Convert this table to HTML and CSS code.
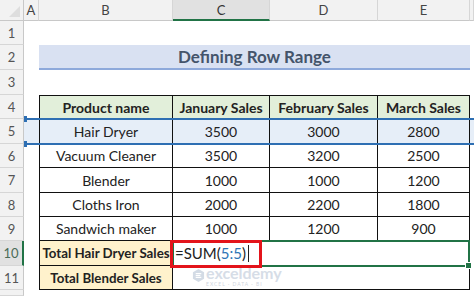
FILE: index.html
```html
<!DOCTYPE html>
<html lang="en">
<head>
    <meta charset="UTF-8">
    <meta name="viewport" content="width=device-width, initial-scale=1.0">
    <title>Defining Row Range</title>
    <link rel="stylesheet" href="styles.css">
</head>
<body>

    <div class="sheet">
        <!-- column headers -->
        <div class="corner"><span class="corner-tri"></span></div>
        <div class="ch">A</div>
        <div class="ch">B</div>
        <div class="ch active">C</div>
        <div class="ch">D</div>
        <div class="ch">E</div>
        <div class="ch"></div>

        <!-- row 1 -->
        <div class="rh">1</div>
        <div></div><div></div><div></div><div></div><div></div><div></div>

        <!-- row 2 -->
        <div class="rh">2</div>
        <div></div>
        <div class="title">Defining Row Range</div>
        <div></div>

        <!-- row 3 -->
        <div class="rh">3</div>
        <div></div><div></div><div></div><div></div><div></div><div></div>

        <!-- row 4 -->
        <div class="rh">4</div>
        <div></div>
        <div class="cell th first">Product name</div>
        <div class="cell th">January Sales</div>
        <div class="cell th">February Sales</div>
        <div class="cell th">March Sales</div>
        <div></div>

        <!-- row 5 (selected) -->
        <div class="rh">5</div>
        <div class="picked"></div>
        <div class="cell first picked">Hair Dryer</div>
        <div class="cell picked">3500</div>
        <div class="cell picked">3000</div>
        <div class="cell picked">2800</div>
        <div class="picked"></div>

        <!-- row 6 -->
        <div class="rh">6</div>
        <div></div>
        <div class="cell first">Vacuum Cleaner</div>
        <div class="cell">3500</div>
        <div class="cell">3200</div>
        <div class="cell">2500</div>
        <div></div>

        <!-- row 7 -->
        <div class="rh">7</div>
        <div></div>
        <div class="cell first">Blender</div>
        <div class="cell">1000</div>
        <div class="cell">1000</div>
        <div class="cell">1200</div>
        <div></div>

        <!-- row 8 -->
        <div class="rh">8</div>
        <div></div>
        <div class="cell first">Cloths Iron</div>
        <div class="cell">2000</div>
        <div class="cell">2200</div>
        <div class="cell">1800</div>
        <div></div>

        <!-- row 9 -->
        <div class="rh">9</div>
        <div></div>
        <div class="cell first">Sandwich maker</div>
        <div class="cell">1000</div>
        <div class="cell">1200</div>
        <div class="cell">900</div>
        <div></div>

        <!-- row 10 -->
        <div class="rh active">10</div>
        <div></div>
        <div class="cell first total">Total Hair Dryer Sales</div>
        <div class="cell merged formula">=SUM(<span class="ref">5:5</span>)<span class="caret"></span></div>
        <div></div>

        <!-- row 11 -->
        <div class="rh">11</div>
        <div></div>
        <div class="cell first total">Total Blender Sales</div>
        <div class="cell merged"></div>
        <div></div>

        <!-- row 12 (cut off) -->
        <div class="rh"></div>
        <div></div><div></div><div></div><div></div><div></div><div></div>

        <!-- selection overlays -->
        <div class="row-pick top"><span class="grip"></span></div>
        <div class="row-pick bottom"><span class="grip"></span></div>
        <div class="active-cell"><span class="fill-handle"></span></div>
        <div class="red-box"></div>

        <div class="watermark">
            <svg class="wm-icon" width="13" height="15" viewBox="0 0 14 16">
                <path d="M7 1 L13 4.5 L13 11.5 L7 15 L1 11.5 L1 4.5 Z" fill="#d3dbe5"/>
                <path d="M4 6 L10 6 M4 8 L9 8 M4 10 L10 10" stroke="#fff" stroke-width="1.2"/>
            </svg>
            <div class="wm-text">
                <span class="wm-name">exceldemy</span>
                <span class="wm-tag">EXCEL · DATA · BI</span>
            </div>
        </div>
    </div>

</body>
</html>
```

FILE: styles.css
```css
body {
    margin: 0;
    padding: 0;
    background: #fff;
    font-family: Lato, "Open Sans", sans-serif;
    color: #222;
    overflow: hidden;
}
.sheet {
    position: relative;
    display: grid;
    grid-template-columns: 24px 15px 134px 97px 108px 92px 4px;
    grid-template-rows: 21px 24px 25px 25px 24px 25px 24px 25px 24px 24px 25px 24px 6px;
    width: 474px;
    height: 296px;
}
.sheet > div {
    box-sizing: border-box;
    min-width: 0;
}

/* headers */
.corner {
    background: #f2f2f2;
    border-right: 1px solid #c8c8c8;
    border-bottom: 1px solid #c8c8c8;
    position: relative;
}
.corner-tri {
    position: absolute;
    right: 3px;
    bottom: 3px;
    width: 0;
    height: 0;
    border-left: 11px solid transparent;
    border-bottom: 11px solid #dedede;
}
.ch {
    background: #f2f2f2;
    border-right: 1px solid #d6d6d6;
    border-bottom: 1px solid #c8c8c8;
    color: #444;
    font-size: 13px;
    display: flex;
    align-items: center;
    justify-content: center;
}
.ch.active {
    background: #e1e1e1;
    border-bottom: 2px solid #217346;
    color: #333;
}
.rh {
    background: #f2f2f2;
    border-right: 1px solid #c8c8c8;
    border-bottom: 1px solid #d6d6d6;
    color: #555;
    font-size: 13px;
    display: flex;
    align-items: center;
    justify-content: center;
}
.rh.active {
    background: #e1e1e1;
    border-right: 2px solid #217346;
    color: #4a6b57;
}

/* title band */
.title {
    grid-column: span 4;
    background: #d9e1f2;
    border-bottom: 2px solid #8ea9db;
    color: #44546a;
    font-weight: bold;
    font-size: 17px;
    display: flex;
    align-items: center;
    justify-content: center;
}

/* table */
.cell {
    border-right: 1px solid #111;
    border-bottom: 1px solid #111;
    font-size: 14px;
    display: flex;
    align-items: center;
    justify-content: center;
    white-space: nowrap;
}
.cell.first {
    border-left: 1px solid #111;
}
.th {
    background: #e2efda;
    border-top: 1px solid #111;
    font-weight: bold;
}
.picked {
    background: #e6eef8;
}
.total {
    background: #fff2cc;
    font-weight: bold;
    font-size: 13.3px;
}
.merged {
    grid-column: span 3;
}
.formula {
    justify-content: flex-start;
    padding-left: 2px;
    font-size: 15px;
}
.ref {
    color: #2e75b6;
}
.caret {
    display: inline-block;
    width: 1px;
    height: 17px;
    margin-left: 2px;
    background: #222;
}

/* overlays */
.row-pick {
    position: absolute;
    left: 25px;
    right: 0;
    height: 2px;
    background: #2e6fb3;
}
.row-pick.top {
    top: 118px;
}
.row-pick.bottom {
    top: 143px;
}
.grip {
    position: absolute;
    left: -1px;
    top: -2px;
    width: 3px;
    height: 6px;
    background: #2e6fb3;
}
.active-cell {
    position: absolute;
    left: 172px;
    top: 240px;
    width: 298px;
    height: 27px;
    border: 2px solid #217346;
    box-sizing: border-box;
}
.fill-handle {
    position: absolute;
    right: -4px;
    bottom: -4px;
    width: 5px;
    height: 5px;
    background: #217346;
    border: 1px solid #fff;
}
.red-box {
    position: absolute;
    left: 170px;
    top: 240px;
    width: 92px;
    height: 28px;
    border: 3px solid #e3141b;
    box-sizing: border-box;
}
.watermark {
    position: absolute;
    left: 192px;
    top: 268px;
    display: flex;
    align-items: flex-start;
    gap: 1px;
}
.wm-text {
    display: flex;
    flex-direction: column;
    line-height: 1;
}
.wm-name {
    font-size: 16px;
    font-weight: bold;
    color: #d6dde7;
    margin-top: -3px;
}
.wm-tag {
    font-size: 5px;
    letter-spacing: 1px;
    color: #cfd5de;
    margin-top: 1px;
}
```
